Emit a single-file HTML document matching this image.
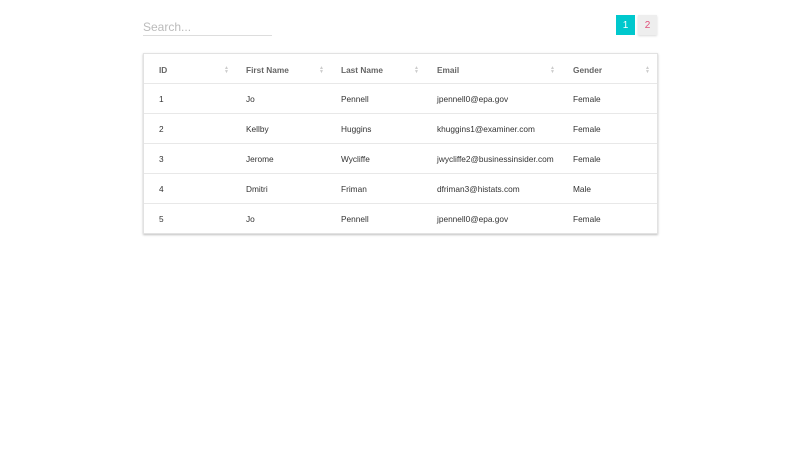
<!DOCTYPE html>
<html><head><style>
body{margin:0;width:800px;height:450px;background:#fff;font-family:"Liberation Sans",sans-serif;position:relative;overflow:hidden}
.search{position:absolute;left:143px;top:20px;width:129px;height:15px;border-bottom:1px solid #ddd;color:#bbb;font-size:12px}
.pg{position:absolute;top:15px;width:19px;height:20px;font-size:10px;line-height:22px;text-align:center}
.p1{left:616px;background:#00c8cd;color:#fff}
.p2{left:638px;background:#eee;color:#e0507a;box-shadow:0 1px 2px rgba(0,0,0,.15)}
.tbl{position:absolute;left:143px;top:53px;width:513px;border:1px solid #e2e2e2;box-shadow:0 1px 2px rgba(0,0,0,.25)}
.row{height:29px;border-bottom:1px solid #e8e8e8;position:relative;font-size:8.3px;color:#333}
.row:last-child{border-bottom:none}
.row span{position:absolute;top:0;line-height:31px}
.hd{font-weight:bold;color:#666;font-size:8.3px}
.hd span{line-height:33px}
.s{position:absolute;top:13px;width:4px;height:7px;color:#ccc;font-size:5px;line-height:3.5px;font-weight:normal}
</style></head><body>
<div class="search">Search...</div>
<div class="pg p1">1</div><div class="pg p2">2</div>
<div class="tbl">
<div class="row hd"><span style="left:15px">ID</span><span style="left:102px">First Name</span><span style="left:197px">Last Name</span><span style="left:293px">Email</span><span style="left:429px">Gender</span>
<div class="s" style="left:80px">▲<br>▼</div><div class="s" style="left:175px">▲<br>▼</div><div class="s" style="left:270px">▲<br>▼</div><div class="s" style="left:406px">▲<br>▼</div><div class="s" style="left:501px">▲<br>▼</div></div>
<div class="row"><span style="left:15px">1</span><span style="left:102px">Jo</span><span style="left:197px">Pennell</span><span style="left:293px">jpennell0@epa.gov</span><span style="left:429px">Female</span></div>
<div class="row"><span style="left:15px">2</span><span style="left:102px">Kellby</span><span style="left:197px">Huggins</span><span style="left:293px">khuggins1@examiner.com</span><span style="left:429px">Female</span></div>
<div class="row"><span style="left:15px">3</span><span style="left:102px">Jerome</span><span style="left:197px">Wycliffe</span><span style="left:293px">jwycliffe2@businessinsider.com</span><span style="left:429px">Female</span></div>
<div class="row"><span style="left:15px">4</span><span style="left:102px">Dmitri</span><span style="left:197px">Friman</span><span style="left:293px">dfriman3@histats.com</span><span style="left:429px">Male</span></div>
<div class="row"><span style="left:15px">5</span><span style="left:102px">Jo</span><span style="left:197px">Pennell</span><span style="left:293px">jpennell0@epa.gov</span><span style="left:429px">Female</span></div>
</div>
</body></html>
